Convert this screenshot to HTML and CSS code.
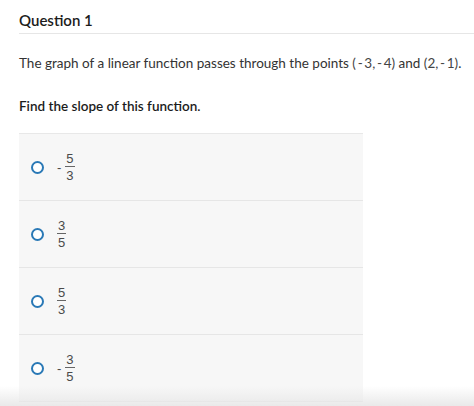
FILE: index.html
```html
<!DOCTYPE html>
<html lang="en">
<head>
  <meta charset="UTF-8">
  <meta name="viewport" content="width=device-width, initial-scale=1.0">
  <title>Question 1</title>
  <link rel="stylesheet" href="styles.css">
</head>
<body>
  <div class="question">
    <h2 class="question-title">Question 1</h2>
    <p class="prompt">The graph of a linear function passes through the points <span class="math">(&#8201;-&#8201;3,&#8201;-&#8201;4)</span> and <span class="math">(2,&#8201;-&#8201;1)</span>.</p>
    <p class="ask">Find the slope of this function.</p>

    <!-- answer choices -->
    <div class="choices">
      <label class="choice">
        <span class="radio"></span>
        <span class="answer">
          <span class="sign">-</span>
          <span class="frac"><span class="num">5</span><span class="den">3</span></span>
        </span>
      </label>
      <label class="choice">
        <span class="radio"></span>
        <span class="answer">
          <span class="frac"><span class="num">3</span><span class="den">5</span></span>
        </span>
      </label>
      <label class="choice">
        <span class="radio"></span>
        <span class="answer">
          <span class="frac"><span class="num">5</span><span class="den">3</span></span>
        </span>
      </label>
      <label class="choice">
        <span class="radio"></span>
        <span class="answer">
          <span class="sign">-</span>
          <span class="frac"><span class="num">3</span><span class="den">5</span></span>
        </span>
      </label>
    </div>
  </div>
  <div class="scroll-shade"></div>
</body>
</html>
```

FILE: styles.css
```css
body {
  font-family: Lato, "Open Sans", Arial, sans-serif;
  margin: 0;
  background-color: #fff;
  color: #222;
  overflow: hidden;
}

.question {
  padding: 11px 0 0 19px;
}

.question-title {
  margin: 0;
  padding-bottom: 3px;
  font-size: 15px;
  line-height: 19px;
  font-weight: 600;
  color: #1c1c1c;
  border-bottom: 1px solid #e6e6e6;
}

.prompt {
  margin: 20px 0 0;
  font-size: 13.5px;
  line-height: 18px;
  color: #333;
}

.math {
  color: #444;
}

.ask {
  margin: 25px 0 0;
  font-size: 13.5px;
  line-height: 18px;
  font-weight: 600;
  color: #1c1c1c;
}

.choices {
  margin-top: 18px;
  width: 344px;
  border-top: 1px solid #e8e8e8;
}

.choice {
  display: flex;
  align-items: center;
  height: 66px;
  padding-left: 12px;
  background-color: #f7f7f7;
  border-bottom: 1px solid #e6e6e6;
}

.radio {
  width: 9px;
  height: 9px;
  border: 2px solid #2a79b6;
  border-radius: 50%;
  background: #fff;
}

.answer {
  display: flex;
  align-items: center;
  margin-left: 13px;
  font-family: "Liberation Sans", Arial, sans-serif;
  font-size: 13px;
  color: #4a4a4a;
}

.sign {
  margin-right: 4px;
}

.frac {
  display: flex;
  flex-direction: column;
  align-items: center;
  line-height: 11px;
}

.num {
  padding: 0 1px 2px;
  border-bottom: 1px solid #666;
}

.den {
  padding-top: 3px;
}

.scroll-shade {
  position: absolute;
  left: 0;
  right: 0;
  bottom: 0;
  height: 20px;
  background: linear-gradient(to bottom, rgba(232, 232, 232, 0), rgba(232, 232, 232, 0.95));
}
```
